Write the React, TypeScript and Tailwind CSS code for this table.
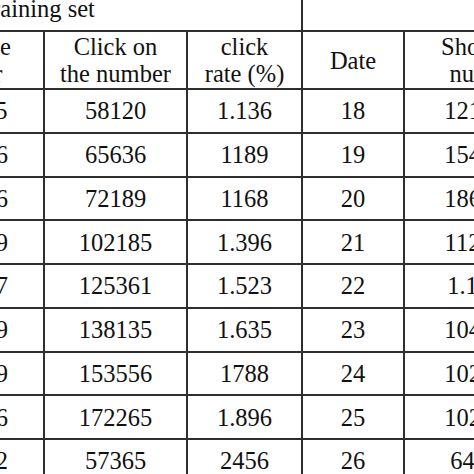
const rows = [
  ['1511605', '58120', '1.136', '18', '1217365'],
  ['1552016', '65636', '1189', '19', '1546201'],
  ['1618056', '72189', '1168', '20', '1862043'],
  ['1732019', '102185', '1.396', '21', '1125791'],
  ['1823017', '125361', '1.523', '22', '1.14587'],
  ['1845019', '138135', '1.635', '23', '1046321'],
  ['1858839', '153556', '1788', '24', '1027436'],
  ['1908476', '172265', '1.896', '25', '1023651'],
  ['2335122', '57365', '2456', '26', '641235'],
];

const cell = 'border-2 border-[#2e2e2e] text-center align-middle p-0 whitespace-nowrap';

export default function App() {
  return (
    <div
      className="w-[474px] h-[474px] overflow-hidden bg-white text-[#111]"
      style={{ fontFamily: '"Liberation Serif", "Times New Roman", serif' }}
    >
      <table className="table-fixed border-collapse w-[684px] min-w-[684px] ml-[-115px] mt-[-13px] text-[24.5px] leading-[27px]">
        <colgroup>
          <col className="w-[158px]" />
          <col className="w-[143px]" />
          <col className="w-[115px]" />
          <col className="w-[102px]" />
          <col className="w-[166px]" />
        </colgroup>
        <tbody>
          <tr className="h-[44px]">
            <td colSpan={3} className="border-2 border-[#2e2e2e] border-t-0 border-l-0 text-left align-middle p-0 pl-[92px] whitespace-nowrap">
              Training set
            </td>
            <td colSpan={2} className="border-2 border-[#2e2e2e] border-t-0 border-r-0 p-0"></td>
          </tr>
          <tr className="h-[58px]">
            <td className={cell}>
              Show the
              <br />
              number
            </td>
            <td className={cell}>
              Click on
              <br />
              the number
            </td>
            <td className={cell}>
              click
              <br />
              rate (%)
            </td>
            <td className={cell}>Date</td>
            <td className={cell}>
              Show the
              <br />
              number
            </td>
          </tr>
          {rows.map((r, i) => (
            <tr key={i} className="h-[43.75px]">
              {r.map((v, j) => (
                <td key={j} className={cell}>
                  {v}
                </td>
              ))}
            </tr>
          ))}
        </tbody>
      </table>
    </div>
  );
}
